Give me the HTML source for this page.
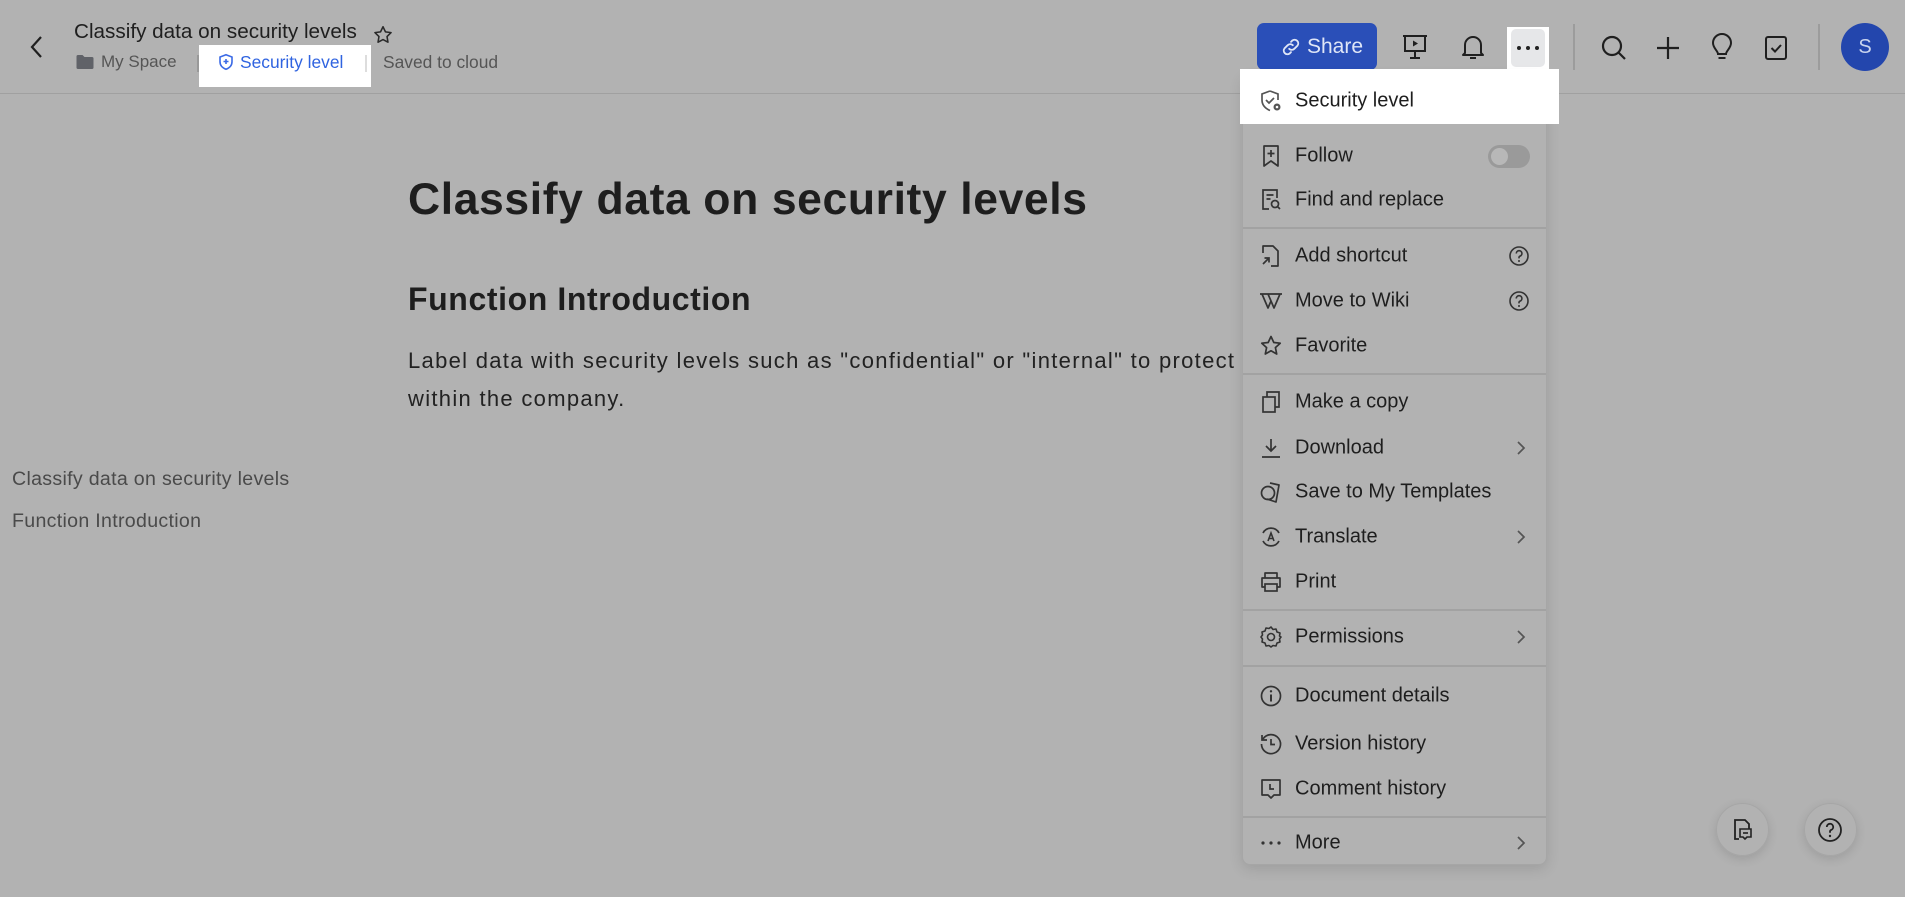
<!DOCTYPE html>
<html><head><meta charset="utf-8"><style>
*{box-sizing:border-box;margin:0;padding:0}
body{width:1905px;height:897px;background:#b2b2b2;font-family:"Liberation Sans",sans-serif;color:#1f1f1f;position:relative;overflow:hidden}
.abs{position:absolute}
.hdr{left:0;top:0;width:1905px;height:94px;border-bottom:1.5px solid #a0a0a0}
svg{display:block}
.ic{position:absolute;transform:translate(-50%,-50%)}
.menu{left:1242px;top:74px;width:305px;height:791px;border:1px solid #a6a6a6;border-radius:8px;box-shadow:0 4px 14px rgba(0,0,0,.12);background:#b2b2b2}
.it{position:absolute;left:1295px;font-size:20px;color:#1e1e1e;transform:translateY(-50%);white-space:nowrap}
.sep{position:absolute;left:1243px;width:303px;height:1.5px;background:#a2a2a2}
.chev{position:absolute;left:1516px}
</style></head><body>
<div class="abs hdr"></div>
<svg class="ic" style="left:37px;top:47px" width="20" height="26" viewBox="0 0 20 26"><path d="M14 3 L5 13 L14 23" fill="none" stroke="#1f1f1f" stroke-width="2.2"/></svg>
<div class="abs" style="left:74px;top:20px;font-size:20.7px;color:#1f1f1f">Classify data on security levels</div>
<svg class="ic" style="left:383px;top:35px" width="22" height="22" viewBox="0 0 24 24"><path d="M12 3l2.7 5.6 6.1.8-4.4 4.3 1 6.1L12 17l-5.4 2.8 1-6.1-4.4-4.3 6.1-.8z" fill="none" stroke="#2a2a2a" stroke-width="1.7" stroke-linejoin="round"/></svg>
<svg class="ic" style="left:85px;top:62px" width="19" height="16" viewBox="0 0 19 16"><path d="M1 2.5Q1 1 2.5 1H7l2 2h7.5Q18 3 18 4.5v9Q18 15 16.5 15h-14Q1 15 1 13.5z" fill="#606268"/></svg>
<div class="abs" style="left:101px;top:52px;font-size:17px;color:#555">My Space</div>
<div class="abs" style="left:197px;top:55px;width:1.5px;height:17px;background:#999"></div>
<div class="abs" style="left:199px;top:45px;width:172px;height:42px;background:#fff"></div>
<svg class="ic" style="left:226px;top:62px" width="16" height="17" viewBox="0 0 16 17"><path d="M8 1.2L14 3.5v4.8c0 3.6-2.6 6.2-6 7.5C4.6 14.5 2 11.9 2 8.3V3.5z" fill="none" stroke="#3b6ae6" stroke-width="1.6"/><path d="M8 5.5v5M5.5 8h5" stroke="#3b6ae6" stroke-width="1.6"/></svg>
<div class="abs" style="left:240px;top:52px;font-size:17.4px;color:#2f63e0">Security level</div>
<div class="abs" style="left:365px;top:55px;width:1.5px;height:17px;background:#ddd"></div>
<div class="abs" style="left:383px;top:52px;font-size:17.4px;color:#555">Saved to cloud</div>

<div class="abs" style="left:1257px;top:23px;width:120px;height:47px;background:#2a4fb8;border-radius:7px;color:#dfe6f7;font-size:21px;line-height:47px;padding-left:50px">Share</div>
<svg class="ic" style="left:1291px;top:47px" width="22" height="22" viewBox="0 0 24 24"><path d="M10 14a4 4 0 0 0 5.6 0l3.5-3.5a4 4 0 0 0-5.6-5.6L12 6.4M14 10a4 4 0 0 0-5.6 0L4.9 13.5a4 4 0 0 0 5.6 5.6l1.5-1.5" fill="none" stroke="#dfe6f7" stroke-width="2" stroke-linecap="round"/></svg>
<svg class="ic" style="left:1415px;top:47px" width="26" height="28" viewBox="0 0 26 28"><rect x="3" y="3" width="20" height="15" fill="none" stroke="#1f1f1f" stroke-width="2"/><path d="M1 3h24M13 18v7M8 25h10" stroke="#1f1f1f" stroke-width="2"/><path d="M11 7.5l5 3-5 3z" fill="#1f1f1f"/></svg>
<svg class="ic" style="left:1473px;top:47px" width="26" height="28" viewBox="0 0 26 28"><path d="M5 20V12a8 8 0 0 1 16 0v8l2 2H3z" fill="none" stroke="#1f1f1f" stroke-width="2" stroke-linejoin="round"/><path d="M10 25h6" stroke="#1f1f1f" stroke-width="2"/></svg>
<div class="abs" style="left:1507px;top:27px;width:42px;height:42px;background:#fff"></div>
<div class="abs" style="left:1511px;top:29px;width:34px;height:38px;background:#e6e7e9;border-radius:5px"></div>
<svg class="ic" style="left:1528px;top:48px" width="24" height="6" viewBox="0 0 24 6"><circle cx="3" cy="3" r="2" fill="#222"/><circle cx="12" cy="3" r="2" fill="#222"/><circle cx="21" cy="3" r="2" fill="#222"/></svg>
<div class="abs" style="left:1573px;top:24px;width:1.5px;height:46px;background:#9c9c9c"></div>
<svg class="ic" style="left:1614px;top:48px" width="28" height="28" viewBox="0 0 28 28"><circle cx="12" cy="12" r="9" fill="none" stroke="#1f1f1f" stroke-width="2.2"/><path d="M18.5 18.5L25 25" stroke="#1f1f1f" stroke-width="2.2"/></svg>
<svg class="ic" style="left:1668px;top:48px" width="26" height="26" viewBox="0 0 26 26"><path d="M13 2v22M2 13h22" stroke="#1f1f1f" stroke-width="2.2"/></svg>
<svg class="ic" style="left:1722px;top:48px" width="24" height="30" viewBox="0 0 24 30"><path d="M8 21c0-3-5-6-5-11a9 9 0 0 1 18 0c0 5-5 8-5 11z" fill="none" stroke="#1f1f1f" stroke-width="2"/><path d="M8.5 25h7" stroke="#1f1f1f" stroke-width="2"/></svg>
<svg class="ic" style="left:1776px;top:48px" width="26" height="28" viewBox="0 0 26 28"><rect x="3" y="3" width="20" height="22" rx="2" fill="none" stroke="#1f1f1f" stroke-width="2"/><path d="M8.5 14l3.5 3.5 6-6.5" fill="none" stroke="#1f1f1f" stroke-width="2"/></svg>
<div class="abs" style="left:1818px;top:24px;width:1.5px;height:46px;background:#9c9c9c"></div>
<div class="abs" style="left:1841px;top:23px;width:48px;height:48px;border-radius:50%;background:#2346ad;color:#c9d4ee;font-size:20px;line-height:48px;text-align:center">S</div>

<div class="abs" style="left:408px;top:175px;font-size:44.5px;font-weight:bold;color:#1e1e1e;letter-spacing:.6px">Classify data on security levels</div>
<div class="abs" style="left:408px;top:281px;font-size:32px;font-weight:bold;color:#1e1e1e;letter-spacing:.6px">Function Introduction</div>
<div class="abs" style="left:408px;top:348px;font-size:22px;color:#222;white-space:nowrap;letter-spacing:1.3px">Label data with security levels such as "confidential" or "internal" to protect</div>
<div class="abs" style="left:408px;top:386px;font-size:22px;color:#222;letter-spacing:1.3px">within the company.</div>
<div class="abs" style="left:12px;top:468px;font-size:19.6px;color:#4a4a4a;letter-spacing:.3px">Classify data on security levels</div>
<div class="abs" style="left:12px;top:510px;font-size:19.6px;color:#4a4a4a;letter-spacing:.3px">Function Introduction</div>

<div class="abs menu"></div>
<div class="abs" style="left:1240px;top:69px;width:319px;height:55px;background:#fff"></div>
<svg class="ic" style="left:1271px;top:101px" width="24" height="24" viewBox="0 0 24 24"><path d="M11 2L19 5v6M11 2L3 5v6c0 5 3.5 8.5 8 10.5" fill="none" stroke="#555" stroke-width="1.7"/><path d="M7 11l3 3 5-5" fill="none" stroke="#555" stroke-width="1.7"/><circle cx="18" cy="18" r="3.5" fill="#555"/><circle cx="18" cy="18" r="1.3" fill="#fff"/></svg>
<div class="it" style="top:101px">Security level</div>

<svg class="ic" style="left:1271px;top:156px" width="22" height="24" viewBox="0 0 22 24"><path d="M4 2h14v20l-7-5-7 5z" fill="none" stroke="#333" stroke-width="1.7" stroke-linejoin="round"/><path d="M11 6v7M7.5 9.5h7" stroke="#333" stroke-width="1.7"/></svg>
<div class="it" style="top:156px">Follow</div>
<div class="abs" style="left:1488px;top:145px;width:42px;height:23px;border-radius:12px;background:#9a9a9a"></div>
<div class="abs" style="left:1491px;top:148px;width:17px;height:17px;border-radius:50%;background:#b8b8b8"></div>

<svg class="ic" style="left:1271px;top:200px" width="22" height="24" viewBox="0 0 22 24"><path d="M9 21H3V2h14v8" fill="none" stroke="#333" stroke-width="1.7"/><path d="M6.5 7h7M6.5 11h4" stroke="#333" stroke-width="1.7"/><circle cx="15" cy="16" r="3.5" fill="none" stroke="#333" stroke-width="1.7"/><path d="M17.5 18.5L20 21" stroke="#333" stroke-width="1.7"/></svg>
<div class="it" style="top:200px">Find and replace</div>
<div class="sep" style="top:227px"></div>

<svg class="ic" style="left:1271px;top:256px" width="22" height="24" viewBox="0 0 22 24"><path d="M3 9V2h10l5 5v15H11" fill="none" stroke="#333" stroke-width="1.7" stroke-linejoin="round"/><path d="M3 20l6-6M4.5 14H9v4.5" fill="none" stroke="#333" stroke-width="1.7"/></svg>
<div class="it" style="top:256px">Add shortcut</div>
<svg class="ic" style="left:1519px;top:256px" width="22" height="22" viewBox="0 0 22 22"><circle cx="11" cy="11" r="9" fill="none" stroke="#333" stroke-width="1.6"/><path d="M8.3 8.5a2.8 2.8 0 1 1 3.7 2.6c-.7.3-1 .8-1 1.5v.8" fill="none" stroke="#333" stroke-width="1.6"/><circle cx="11" cy="16" r="1" fill="#333"/></svg>

<svg class="ic" style="left:1271px;top:301px" width="24" height="20" viewBox="0 0 24 20"><path d="M1 3h22M3 3l6 14 3-7 3 7 6-14M9 3l6 14" fill="none" stroke="#333" stroke-width="1.7" stroke-linejoin="round"/></svg>
<div class="it" style="top:301px">Move to Wiki</div>
<svg class="ic" style="left:1519px;top:301px" width="22" height="22" viewBox="0 0 22 22"><circle cx="11" cy="11" r="9" fill="none" stroke="#333" stroke-width="1.6"/><path d="M8.3 8.5a2.8 2.8 0 1 1 3.7 2.6c-.7.3-1 .8-1 1.5v.8" fill="none" stroke="#333" stroke-width="1.6"/><circle cx="11" cy="16" r="1" fill="#333"/></svg>

<svg class="ic" style="left:1271px;top:346px" width="24" height="24" viewBox="0 0 24 24"><path d="M12 2.5l2.8 6 6.4.7-4.8 4.4 1.3 6.4L12 16.8 6.3 20l1.3-6.4-4.8-4.4 6.4-.7z" fill="none" stroke="#333" stroke-width="1.7" stroke-linejoin="round"/></svg>
<div class="it" style="top:346px">Favorite</div>
<div class="sep" style="top:373px"></div>

<svg class="ic" style="left:1271px;top:402px" width="22" height="24" viewBox="0 0 22 24"><rect x="3" y="7" width="12" height="15" fill="none" stroke="#333" stroke-width="1.7"/><path d="M7 7V2h12v15h-4" fill="none" stroke="#333" stroke-width="1.7"/></svg>
<div class="it" style="top:402px">Make a copy</div>

<svg class="ic" style="left:1271px;top:448px" width="22" height="22" viewBox="0 0 22 22"><path d="M11 2v12M6 9l5 5 5-5M2 20h18" fill="none" stroke="#333" stroke-width="1.7"/></svg>
<div class="it" style="top:448px">Download</div>
<svg class="ic chev" style="left:1521px;top:448px" width="10" height="16" viewBox="0 0 10 16"><path d="M2 2l6 6-6 6" fill="none" stroke="#555" stroke-width="1.7"/></svg>

<svg class="ic" style="left:1271px;top:492px" width="24" height="24" viewBox="0 0 24 24"><circle cx="9" cy="13" r="6.5" fill="none" stroke="#333" stroke-width="1.7"/><path d="M11 3l9 2-3 17-9-3" fill="none" stroke="#333" stroke-width="1.7" stroke-linejoin="round"/></svg>
<div class="it" style="top:492px">Save to My Templates</div>

<svg class="ic" style="left:1271px;top:537px" width="24" height="24" viewBox="0 0 24 24"><path d="M4 8a9 9 0 0 1 16 0M20 16a9 9 0 0 1-16 0" fill="none" stroke="#333" stroke-width="1.7"/><path d="M9 16l3-8 3 8M10 13.5h4" fill="none" stroke="#333" stroke-width="1.6"/></svg>
<div class="it" style="top:537px">Translate</div>
<svg class="ic chev" style="left:1521px;top:537px" width="10" height="16" viewBox="0 0 10 16"><path d="M2 2l6 6-6 6" fill="none" stroke="#555" stroke-width="1.7"/></svg>

<svg class="ic" style="left:1271px;top:582px" width="24" height="24" viewBox="0 0 24 24"><path d="M6 8V3h12v5M6 17H3V8h18v9h-3" fill="none" stroke="#333" stroke-width="1.7" stroke-linejoin="round"/><rect x="6" y="14" width="12" height="7" fill="none" stroke="#333" stroke-width="1.7"/></svg>
<div class="it" style="top:582px">Print</div>
<div class="sep" style="top:609px"></div>

<svg class="ic" style="left:1271px;top:637px" width="24" height="24" viewBox="0 0 24 24"><path d="M12 2l2 2.5 3-.5 1 3 3 1-.5 3L22 12l-1.5 2 .5 3-3 1-1 3-3-.5L12 22l-2-1.5-3 .5-1-3-3-1 .5-3L2 12l1.5-2L3 7l3-1 1-3 3 .5z" fill="none" stroke="#333" stroke-width="1.6" stroke-linejoin="round"/><circle cx="12" cy="12" r="3.5" fill="none" stroke="#333" stroke-width="1.6"/></svg>
<div class="it" style="top:637px">Permissions</div>
<svg class="ic chev" style="left:1521px;top:637px" width="10" height="16" viewBox="0 0 10 16"><path d="M2 2l6 6-6 6" fill="none" stroke="#555" stroke-width="1.7"/></svg>
<div class="sep" style="top:665px"></div>

<svg class="ic" style="left:1271px;top:696px" width="24" height="24" viewBox="0 0 24 24"><circle cx="12" cy="12" r="9.5" fill="none" stroke="#333" stroke-width="1.7"/><path d="M12 10.5v7" stroke="#333" stroke-width="2"/><circle cx="12" cy="7.3" r="1.2" fill="#333"/></svg>
<div class="it" style="top:696px">Document details</div>

<svg class="ic" style="left:1271px;top:744px" width="24" height="24" viewBox="0 0 24 24"><path d="M4 7a9.5 9.5 0 1 1-1.5 5" fill="none" stroke="#333" stroke-width="1.7"/><path d="M3 3v5h5" fill="none" stroke="#333" stroke-width="1.7"/><path d="M12 7v5.5h4" fill="none" stroke="#333" stroke-width="1.7"/></svg>
<div class="it" style="top:744px">Version history</div>

<svg class="ic" style="left:1271px;top:789px" width="24" height="24" viewBox="0 0 24 24"><path d="M3 3h18v15h-6l-3 3-3-3H3z" fill="none" stroke="#333" stroke-width="1.7" stroke-linejoin="round"/><path d="M11 7v5h4" fill="none" stroke="#333" stroke-width="1.7"/></svg>
<div class="it" style="top:789px">Comment history</div>
<div class="sep" style="top:816px"></div>

<svg class="ic" style="left:1271px;top:843px" width="22" height="6" viewBox="0 0 22 6"><circle cx="3" cy="3" r="1.6" fill="#333"/><circle cx="11" cy="3" r="1.6" fill="#333"/><circle cx="19" cy="3" r="1.6" fill="#333"/></svg>
<div class="it" style="top:843px">More</div>
<svg class="ic chev" style="left:1521px;top:843px" width="10" height="16" viewBox="0 0 10 16"><path d="M2 2l6 6-6 6" fill="none" stroke="#555" stroke-width="1.7"/></svg>

<div class="abs" style="left:1716px;top:803px;width:53px;height:53px;border-radius:50%;border:1px solid #a6a6a6;box-shadow:0 3px 10px rgba(0,0,0,.12)"></div>
<svg class="ic" style="left:1742px;top:830px" width="22" height="24" viewBox="0 0 22 24"><path d="M8 21H4V2h10l4 4v5" fill="none" stroke="#222" stroke-width="1.8"/><path d="M9 11h11v8h-4l-2 2-2-2H9z" fill="none" stroke="#222" stroke-width="1.6"/><path d="M12 15h5" stroke="#222" stroke-width="1.6"/></svg>
<div class="abs" style="left:1804px;top:803px;width:53px;height:53px;border-radius:50%;border:1px solid #a6a6a6;box-shadow:0 3px 10px rgba(0,0,0,.12)"></div>
<svg class="ic" style="left:1830px;top:830px" width="26" height="26" viewBox="0 0 26 26"><circle cx="13" cy="13" r="11" fill="none" stroke="#222" stroke-width="1.8"/><path d="M9.8 10a3.2 3.2 0 1 1 4.3 3c-.8.3-1.1.9-1.1 1.7v1" fill="none" stroke="#222" stroke-width="1.8"/><circle cx="13" cy="19" r="1.2" fill="#222"/></svg>
</body></html>
